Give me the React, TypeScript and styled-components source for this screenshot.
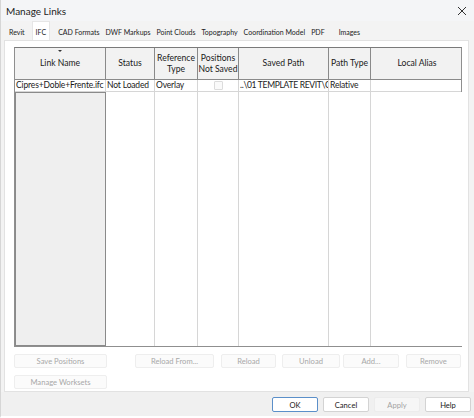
import React from 'react';
import styled, { createGlobalStyle } from 'styled-components';

const GlobalStyle = createGlobalStyle`
  html, body {
    margin: 0;
    padding: 0;
    background: #e9e9e9;
  }
  * {
    box-sizing: border-box;
  }
`;

const columns = [
  { title: 'Link Name', width: 91, sort: true },
  { title: 'Status', width: 49 },
  { title: 'Reference\nType', width: 43 },
  { title: 'Positions\nNot Saved', width: 41 },
  { title: 'Saved Path', width: 90 },
  { title: 'Path Type', width: 42 },
  { title: 'Local Alias', width: 92 },
];
const gridCols = columns.map((c) => c.width + 'px').join(' ');

const tabs = [
  'Revit',
  'IFC',
  'CAD Formats',
  'DWF Markups',
  'Point Clouds',
  'Topography',
  'Coordination Model',
  'PDF',
  'Images',
];

const actions = [
  { label: 'Save Positions', w: 93, ml: 0 },
  { label: 'Reload From...', w: 79, ml: 28 },
  { label: 'Reload', w: 55, ml: 7 },
  { label: 'Unload', w: 58, ml: 6 },
  { label: 'Add...', w: 56, ml: 3 },
  { label: 'Remove', w: 55, ml: 7 },
];

export default function App() {
  return (
    <Window>
      <GlobalStyle />
      <TitleBar>
        <Title>Manage Links</Title>
        <Close>
          <svg width="10" height="10" viewBox="0 0 10 10">
            <path d="M1 1 L9 9 M9 1 L1 9" stroke="#333" strokeWidth="1" />
          </svg>
        </Close>
      </TitleBar>
      <TabStrip>
        {tabs.map((t) => (
          <Tab key={t} $active={t === 'IFC'} $wide={t === 'PDF'}>
            {t}
          </Tab>
        ))}
      </TabStrip>
      <Page>
        <Table>
          <HeaderRow>
            {columns.map((c) => (
              <HeadCell key={c.title}>
                {c.sort && <SortMark />}
                {c.title}
              </HeadCell>
            ))}
          </HeaderRow>
          <BodyRow>
            <Cell>Cipres+Doble+Frente.ifc</Cell>
            <Cell>Not Loaded</Cell>
            <Cell>Overlay</Cell>
            <Cell $center>
              <Check />
            </Cell>
            <Cell $tight>..\01 TEMPLATE REVIT\Ci</Cell>
            <Cell>Relative</Cell>
            <Cell />
          </BodyRow>
          <FillRow>
            <FillCell $gray />
            <FillCell />
            <FillCell />
            <FillCell />
            <FillCell />
            <FillCell />
            <FillCell />
          </FillRow>
        </Table>
        <ActionRow>
          {actions.map((a) => (
            <GhostButton key={a.label} $w={a.w} $ml={a.ml}>
              {a.label}
            </GhostButton>
          ))}
        </ActionRow>
        <ActionRow>
          <GhostButton $w={93} $ml={0}>
            Manage Worksets
          </GhostButton>
        </ActionRow>
      </Page>
      <Footer>
        <DialogButton $focus>OK</DialogButton>
        <DialogButton>Cancel</DialogButton>
        <DialogButton $disabled>Apply</DialogButton>
        <DialogButton>Help</DialogButton>
      </Footer>
    </Window>
  );
}

const Window = styled.div`
  width: 474px;
  height: 418px;
  display: flex;
  flex-direction: column;
  background: #f3f3f3;
  border-left: 1px solid #d6d6d6;
  border-bottom: 2px solid #ffffff;
  font-family: Lato, 'Noto Sans', sans-serif;
  color: #1a1a1a;
  overflow: hidden;
`;

const TitleBar = styled.div`
  height: 21px;
  display: flex;
  align-items: center;
  justify-content: space-between;
  padding: 0 7px 0 5px;
  background: #f4f5f7;
`;

const Title = styled.div`
  font-size: 10px;
  color: #222;
`;

const Close = styled.div`
  display: flex;
  align-items: center;
`;

const TabStrip = styled.div`
  height: 19px;
  display: flex;
  align-items: flex-end;
  padding-left: 5px;
`;

const Tab = styled.div<{ $active?: boolean; $wide?: boolean }>`
  height: ${(p) => (p.$active ? '19px' : '17px')};
  padding: 0 ${(p) => (p.$wide ? '11px' : '3px')} 0 3px;
  padding-top: ${(p) => (p.$active ? '3px' : '2px')};
  margin: ${(p) => (p.$active ? '0 5px 0 4px' : '0')};
  font-size: 7px;
  line-height: 15px;
  color: #222;
  background: ${(p) => (p.$active ? '#ffffff' : 'transparent')};
  border: ${(p) => (p.$active ? '1px solid #e6e6e6' : 'none')};
  border-bottom: none;
  white-space: nowrap;
`;

const Page = styled.div`
  flex: none;
  height: 352px;
  margin: 0 5px 0 3px;
  padding: 6px 7px 0 9px;
  background: #ffffff;
  border: 1px solid #e2e2e2;
  display: flex;
  flex-direction: column;
`;

const Table = styled.div`
  width: 448px;
  height: 300px;
  display: flex;
  flex-direction: column;
  border: 1px solid #8f8f8f;
  border-top-color: #7a7a7a;
`;

const HeaderRow = styled.div`
  display: grid;
  grid-template-columns: ${gridCols};
  height: 32px;
  background: #f2f2f2;
  border-bottom: 1px solid #8a8a8a;
`;

const HeadCell = styled.div`
  position: relative;
  display: flex;
  align-items: center;
  justify-content: center;
  text-align: center;
  white-space: pre-line;
  font-size: 8.6px;
  line-height: 11px;
  border-right: 1px solid #8a8a8a;
  &:last-child {
    border-right: none;
  }
`;

const SortMark = styled.span`
  position: absolute;
  top: 2px;
  left: 50%;
  margin-left: -2px;
  width: 0;
  height: 0;
  border-left: 2px solid transparent;
  border-right: 2px solid transparent;
  border-top: 2px solid #333;
`;

const BodyRow = styled.div`
  display: grid;
  grid-template-columns: ${gridCols};
  height: 12px;
  border-bottom: 1px solid #d6d6d6;
`;

const Cell = styled.div<{ $center?: boolean; $tight?: boolean }>`
  display: flex;
  align-items: center;
  justify-content: ${(p) => (p.$center ? 'center' : 'flex-start')};
  padding-left: 1px;
  font-size: 8.5px;
  letter-spacing: ${(p) => (p.$tight ? '-0.3px' : '-0.15px')};
  line-height: 11px;
  white-space: nowrap;
  overflow: hidden;
  border-right: 1px solid #d6d6d6;
  &:last-child {
    border-right: none;
  }
`;

const Check = styled.span`
  width: 9px;
  height: 9px;
  border: 1px solid #dcdcdc;
  border-radius: 1px;
  background: #fafafa;
`;

const FillRow = styled.div`
  flex: 1;
  display: grid;
  grid-template-columns: ${gridCols};
`;

const FillCell = styled.div<{ $gray?: boolean }>`
  background: ${(p) => (p.$gray ? '#efefef' : '#ffffff')};
  border: ${(p) => (p.$gray ? '1px solid #8a8a8a' : 'none')};
  border-right: 1px solid ${(p) => (p.$gray ? '#8a8a8a' : '#d6d6d6')};
  &:last-child {
    border-right: none;
  }
`;

const ActionRow = styled.div`
  display: flex;
  margin-top: 7px;
`;

const GhostButton = styled.div<{ $w: number; $ml: number }>`
  width: ${(p) => p.$w}px;
  margin-left: ${(p) => p.$ml}px;
  height: 14px;
  display: flex;
  align-items: center;
  justify-content: center;
  font-size: 7.6px;
  color: #a8a8a8;
  background: #fbfbfb;
  border: 1px solid #eeeeee;
  border-radius: 2px;
`;

const Footer = styled.div`
  flex: 1;
  display: flex;
  justify-content: flex-end;
  align-items: flex-start;
  gap: 5px;
  padding: 5px 3px 0 0;
  background: #f0f0f0;
`;

const DialogButton = styled.div<{ $focus?: boolean; $disabled?: boolean }>`
  width: 46px;
  height: 15px;
  display: flex;
  align-items: center;
  justify-content: center;
  font-size: 7.6px;
  color: ${(p) => (p.$disabled ? '#a3a3a3' : '#1a1a1a')};
  background: ${(p) => (p.$disabled ? '#f6f6f6' : '#ffffff')};
  border: 1px solid
    ${(p) => (p.$focus ? '#5b8fc9' : p.$disabled ? '#ececec' : '#d3d3d3')};
  border-radius: 2px;
`;
